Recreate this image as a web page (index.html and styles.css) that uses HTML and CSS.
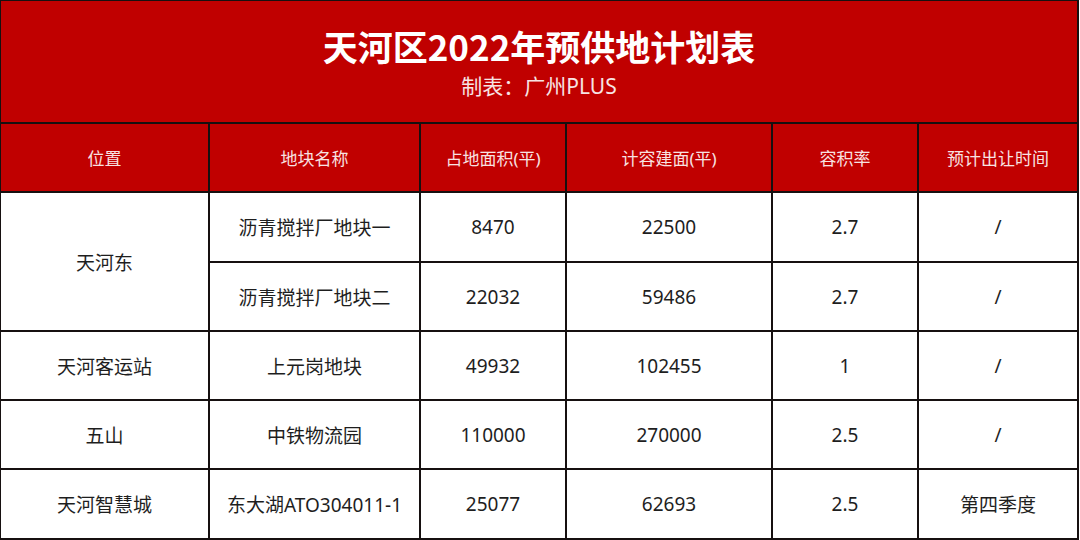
FILE: index.html
```html
<!DOCTYPE html>
<html lang="zh-CN">
<head>
<meta charset="utf-8">
<title>天河区2022年预供地计划表</title>
<link rel="stylesheet" href="styles.css">
</head>
<body>
<div class="sheet">
  <div class="title-cell">
    <div class="title">天河区2022年预供地计划表</div>
    <div class="subtitle">制表：广州PLUS</div>
  </div>

  <div class="head">位置</div>
  <div class="head">地块名称</div>
  <div class="head">占地面积(平)</div>
  <div class="head">计容建面(平)</div>
  <div class="head">容积率</div>
  <div class="head">预计出让时间</div>

  <div class="cell span2">天河东</div>
  <div class="cell">沥青搅拌厂地块一</div>
  <div class="cell">8470</div>
  <div class="cell">22500</div>
  <div class="cell">2.7</div>
  <div class="cell">/</div>

  <div class="cell">沥青搅拌厂地块二</div>
  <div class="cell">22032</div>
  <div class="cell">59486</div>
  <div class="cell">2.7</div>
  <div class="cell">/</div>

  <div class="cell">天河客运站</div>
  <div class="cell">上元岗地块</div>
  <div class="cell">49932</div>
  <div class="cell">102455</div>
  <div class="cell">1</div>
  <div class="cell">/</div>

  <div class="cell">五山</div>
  <div class="cell">中铁物流园</div>
  <div class="cell">110000</div>
  <div class="cell">270000</div>
  <div class="cell">2.5</div>
  <div class="cell">/</div>

  <div class="cell">天河智慧城</div>
  <div class="cell">东大湖ATO304011-1</div>
  <div class="cell">25077</div>
  <div class="cell">62693</div>
  <div class="cell">2.5</div>
  <div class="cell">第四季度</div>
</div>
</body>
</html>
```

FILE: styles.css
```css
html, body {
  margin: 0;
  padding: 0;
  background: #ffffff;
}

body {
  width: 1080px;
  height: 540px;
  overflow: hidden;
  font-family: "Noto Sans", "Noto Sans CJK SC", sans-serif;
}

.sheet {
  box-sizing: border-box;
  width: 1079px;
  height: 540px;
  padding: 1px 2px 2px 1px;
  background: #161010;
  display: grid;
  grid-template-columns: 207px 209px 144px 204px 144px 158px;
  grid-template-rows: 121px 67px 68px 67px 67px 67px 68px;
  gap: 2px;
}

.title-cell {
  grid-column: 1 / -1;
  background: #c00000;
  color: #ffffff;
  display: flex;
  flex-direction: column;
  align-items: center;
  justify-content: flex-start;
  padding-top: 20px;
  box-sizing: border-box;
}

.title {
  font-family: "Noto Sans CJK SC", sans-serif;
  font-weight: 700;
  font-size: 35px;
  line-height: 50px;
  letter-spacing: 0;
}

.subtitle {
  font-family: "Noto Sans", "Noto Sans CJK SC", sans-serif;
  font-size: 21px;
  line-height: 30px;
  color: #f7e4e4;
  margin-top: 0px;
}

.head {
  background: #c00000;
  color: #f8e2e2;
  font-size: 17px;
  display: flex;
  align-items: center;
  justify-content: center;
}

.cell {
  background: #ffffff;
  color: #1e1e1e;
  font-size: 19px;
  display: flex;
  align-items: center;
  justify-content: center;
}

.span2 {
  grid-row: span 2;
}
```
